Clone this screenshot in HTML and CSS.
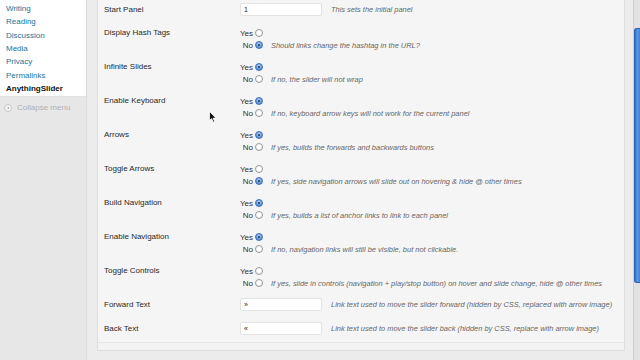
FILE: index.html
```html
<!DOCTYPE html>
<html>
<head>
<meta charset="utf-8">
<link rel="stylesheet" href="styles.css">
</head>
<body>
<div class="app">
  <aside class="sidebar">
    <ul class="submenu">
      <li><a>Writing</a></li>
      <li><a>Reading</a></li>
      <li><a>Discussion</a></li>
      <li><a>Media</a></li>
      <li><a>Privacy</a></li>
      <li><a>Permalinks</a></li>
      <li class="current"><a>AnythingSlider</a></li>
    </ul>
    <div class="collapse"><span class="collapse-icon"></span>Collapse menu</div>
  </aside>

  <main class="panel">
    <div class="row text first">
      <div class="label">Start Panel</div>
      <div class="control"><span class="field">1</span><span class="desc">This sets the initial panel</span></div>
    </div>

    <div class="row radios">
      <div class="label">Display Hash Tags</div>
      <div class="control">
        <div class="opt"><span class="opt-label">Yes</span><span class="radio"></span></div>
        <div class="opt"><span class="opt-label">No</span><span class="radio on"></span><span class="desc">Should links change the hashtag in the URL?</span></div>
      </div>
    </div>

    <div class="row radios">
      <div class="label">Infinite Slides</div>
      <div class="control">
        <div class="opt"><span class="opt-label">Yes</span><span class="radio on"></span></div>
        <div class="opt"><span class="opt-label">No</span><span class="radio"></span><span class="desc">If no, the slider will not wrap</span></div>
      </div>
    </div>

    <div class="row radios">
      <div class="label">Enable Keyboard</div>
      <div class="control">
        <div class="opt"><span class="opt-label">Yes</span><span class="radio on"></span></div>
        <div class="opt"><span class="opt-label">No</span><span class="radio"></span><span class="desc">If no, keyboard arrow keys will not work for the current panel</span></div>
      </div>
    </div>

    <div class="row radios">
      <div class="label">Arrows</div>
      <div class="control">
        <div class="opt"><span class="opt-label">Yes</span><span class="radio on"></span></div>
        <div class="opt"><span class="opt-label">No</span><span class="radio"></span><span class="desc">If yes, builds the forwards and backwards buttons</span></div>
      </div>
    </div>

    <div class="row radios">
      <div class="label">Toggle Arrows</div>
      <div class="control">
        <div class="opt"><span class="opt-label">Yes</span><span class="radio"></span></div>
        <div class="opt"><span class="opt-label">No</span><span class="radio on"></span><span class="desc">If yes, side navigation arrows will slide out on hovering &amp; hide @ other times</span></div>
      </div>
    </div>

    <div class="row radios">
      <div class="label">Build Navigation</div>
      <div class="control">
        <div class="opt"><span class="opt-label">Yes</span><span class="radio on"></span></div>
        <div class="opt"><span class="opt-label">No</span><span class="radio"></span><span class="desc">If yes, builds a list of anchor links to link to each panel</span></div>
      </div>
    </div>

    <div class="row radios">
      <div class="label">Enable Navigation</div>
      <div class="control">
        <div class="opt"><span class="opt-label">Yes</span><span class="radio on"></span></div>
        <div class="opt"><span class="opt-label">No</span><span class="radio"></span><span class="desc">If no, navigation links will still be visible, but not clickable.</span></div>
      </div>
    </div>

    <div class="row radios">
      <div class="label">Toggle Controls</div>
      <div class="control">
        <div class="opt"><span class="opt-label">Yes</span><span class="radio"></span></div>
        <div class="opt"><span class="opt-label">No</span><span class="radio"></span><span class="desc">If yes, slide in controls (navigation + play/stop button) on hover and slide change, hide @ other times</span></div>
      </div>
    </div>

    <div class="row text">
      <div class="label">Forward Text</div>
      <div class="control"><span class="field">&raquo;</span><span class="desc">Link text used to move the slider forward (hidden by CSS, replaced with arrow image)</span></div>
    </div>

    <div class="row text">
      <div class="label">Back Text</div>
      <div class="control"><span class="field">&laquo;</span><span class="desc">Link text used to move the slider back (hidden by CSS, replace with arrow image)</span></div>
    </div>

    <div class="panel-foot"></div>
  </main>

  <div class="scrollbar"><div class="thumb"></div></div>
</div>

<svg class="cursor" width="8" height="12" viewBox="0 0 8 12">
  <path d="M0.5 0.5 L0.5 9.5 L2.6 7.6 L4.2 11.2 L5.6 10.6 L4.1 7.1 L7 7.1 Z" fill="#111" stroke="#fff" stroke-width="0.8"/>
</svg>
</body>
</html>
```

FILE: styles.css
```css
* { box-sizing: border-box; }

html, body {
  margin: 0;
  padding: 0;
}

body {
  width: 640px;
  height: 360px;
  overflow: hidden;
  background: #ececec;
  font-family: "Liberation Sans", Arial, sans-serif;
  font-size: 8px;
  color: #333;
  position: relative;
}

.app {
  display: flex;
  align-items: flex-start;
  height: 360px;
}

/* Sidebar */
.sidebar {
  width: 87px;
  height: 360px;
  flex: none;
  background: #e7e7e7;
  border-right: 1px solid #dcdcdc;
}

.submenu {
  list-style: none;
  margin: 0;
  padding: 2px 0 1px 0;
  background: #fff;
  border-bottom: 1px solid #e2e2e2;
}

.submenu li {
  line-height: 13.33px;
  padding-left: 6px;
}

.submenu a {
  color: #21759b;
}

.submenu .current a {
  color: #111;
  font-weight: bold;
}

.collapse {
  display: flex;
  align-items: center;
  padding: 5px 0 0 4px;
  line-height: 12px;
  color: #b0b0b0;
}

.collapse-icon {
  width: 8px;
  height: 8px;
  border-radius: 50%;
  border: 1px solid #c8c8c8;
  background: #f4f4f4;
  margin-right: 5px;
  position: relative;
}

.collapse-icon::after {
  content: "";
  position: absolute;
  left: 1.5px;
  top: 1.5px;
  border-right: 2.5px solid #999;
  border-top: 1.5px solid transparent;
  border-bottom: 1.5px solid transparent;
}

/* Main panel */
.panel {
  width: 528px;
  height: 351px;
  margin-left: 10px;
  flex: none;
  background: #f5f5f5;
  border: 1px solid #dedede;
  border-top: none;
  display: flex;
  flex-direction: column;
}

.row {
  display: flex;
  flex: none;
  padding-left: 6px;
}

.row .label {
  width: 135px;
  flex: none;
  line-height: 12px;
  color: #2a2a2a;
}

.row.radios {
  padding-top: 5px;
  padding-bottom: 5px;
  height: 34px;
}

.row.text {
  align-items: center;
  height: 24px;
  padding-top: 4px;
  padding-bottom: 7px;
}

.row.text.first {
  height: 22px;
  padding-top: 3px;
  padding-bottom: 6px;
}

.control {
  display: flex;
  flex-direction: column;
}

.row.text .control {
  flex-direction: row;
  align-items: center;
}

.opt {
  display: flex;
  align-items: center;
  height: 12px;
  flex: none;
}

.opt-label {
  width: 14px;
  text-align: right;
  color: #333;
}

.radio {
  width: 8px;
  height: 8px;
  border-radius: 50%;
  border: 1px solid #9a9a9a;
  background: radial-gradient(circle at 50% 40%, #fff 40%, #e4e4e4 100%);
  margin-left: 2px;
  flex: none;
  position: relative;
}

.radio.on {
  border-color: #3f6fb0;
  background: radial-gradient(circle at 50% 35%, #a9c9f2 10%, #5a8fd8 70%, #3e72bf 100%);
}

.radio.on::after {
  content: "";
  position: absolute;
  left: 2px;
  top: 2px;
  width: 2px;
  height: 2px;
  border-radius: 50%;
  background: #1b2f4f;
}

.desc {
  font-style: italic;
  font-size: 7.45px;
  color: #666;
  margin-left: 8px;
  white-space: nowrap;
}

.field {
  width: 82px;
  height: 13px;
  flex: none;
  background: #fff;
  border: 1px solid #e3e3e3;
  border-radius: 2px;
  font-size: 7px;
  line-height: 11px;
  padding-left: 3px;
  color: #222;
  margin-left: 1px;
}

.row.text .desc {
  margin-left: 9px;
}

.panel-foot {
  flex: 1;
  border-top: 1px solid #e6e6e6;
  background: #f3f3f3;
}

/* Scrollbar */
.scrollbar {
  margin-left: 8px;
  width: 7px;
  height: 360px;
  flex: none;
  background: #e2e2e2;
  border-left: 1px solid #cfcfcf;
  padding-top: 28px;
}

.thumb {
  height: 255px;
  width: 6px;
  border-radius: 3px 0 0 3px;
  background: linear-gradient(to right, #2d6fcb, #5c9ae8 50%, #3f80d8);
  border: 1px solid #2a62b5;
  border-right: none;
}

/* Mouse cursor overlay */
.cursor {
  position: absolute;
  left: 209px;
  top: 111px;
}
```
